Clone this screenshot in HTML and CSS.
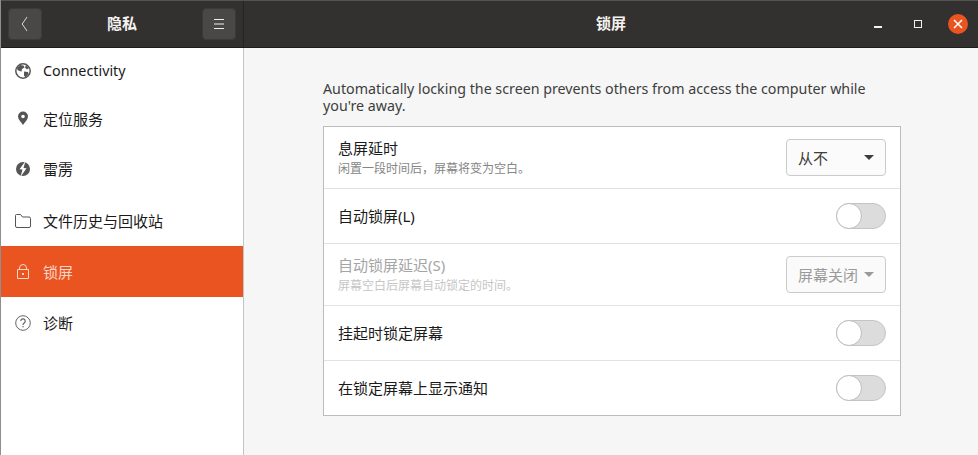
FILE: index.html
```html
<!DOCTYPE html>
<html lang="zh-CN">
<head>
  <meta charset="UTF-8" />
  <title>锁屏</title>
  <link rel="stylesheet" href="styles.css">
</head>
<body>
  <div class="window">
    <header class="titlebar">
      <div class="titlebar-left">
        <button class="head-btn" aria-label="返回">
          <svg width="16" height="16" viewBox="0 0 16 16"><path d="M10 1 5.200 8l4.800 7" fill="none" stroke="#dcdad6" stroke-width="1"/></svg>
        </button>
        <div class="head-title">隐私</div>
        <button class="head-btn" aria-label="菜单">
          <svg width="16" height="16" viewBox="0 0 16 16"><path d="M3 3.500h10M3 8h10M3 12.500h10" fill="none" stroke="#f0eeea" stroke-width="1"/></svg>
        </button>
      </div>
      <div class="titlebar-main">
        <div class="head-title">锁屏</div>
        <div class="win-controls">
          <span class="win-min"></span>
          <span class="win-max"></span>
          <span class="win-close">
            <svg width="12" height="12" viewBox="0 0 12 12"><path d="M2 2l8 8M10 2l-8 8" stroke="#fff" stroke-width="1.500" fill="none"/></svg>
          </span>
        </div>
      </div>
    </header>

    <div class="body-wrap">
      <nav class="sidebar">
        <div class="side-row">
          <svg class="side-icon" width="16" height="16" viewBox="0 0 16 16"><circle cx="8" cy="8" r="7.200" fill="none" stroke="#555" stroke-width="1.500"/><path d="M2 5 5 2l3.500.5 1 2-2.500 1.500-.5 2.500L4.500 8 2.500 7zM9 8.500l4 .5.500 2-3 3.500-1.500-2zM11 2l3 3-2 1.500-2-2z" fill="#555"/></svg>
          <span class="latin">Connectivity</span>
        </div>
        <div class="side-row">
          <svg class="side-icon" width="16" height="16" viewBox="0 0 16 16"><path fill-rule="evenodd" d="M8 .5a5 5 0 0 1 5 5c0 3-3 5.500-5 8.500-2-3-5-5.500-5-8.500a5 5 0 0 1 5-5zm0 3.200a1.800 1.800 0 1 0 0 3.600 1.800 1.800 0 0 0 0-3.600z" fill="#555"/></svg>
          <span>定位服务</span>
        </div>
        <div class="side-row">
          <svg class="side-icon" width="16" height="16" viewBox="0 0 16 16"><circle cx="8" cy="8" r="7" fill="#555"/><path d="M10.500 0 4.500 8.200l3 .3L5.500 16l6-8.800-3-.2z" fill="#fff"/></svg>
          <span>雷雳</span>
        </div>
        <div class="side-row">
          <svg class="side-icon" width="16" height="14" viewBox="0 0 16 14"><path d="M1.500.5h4l2 2.500h6.500a1.500 1.500 0 0 1 1.500 1.500v7.500a1.500 1.500 0 0 1-1.500 1.500H2A1.500 1.500 0 0 1 .5 12V1.500a1 1 0 0 1 1-1z" fill="none" stroke="#555"/></svg>
          <span>文件历史与回收站</span>
        </div>
        <div class="side-row side-row-active">
          <svg class="side-icon" width="16" height="16" viewBox="0 0 16 16"><path d="M2.500 5.500h11v9h-11zM4.500 5.500V4a3.500 3.500 0 0 1 7 0v1.500" fill="none" stroke="#fbd5c6"/><rect x="7" y="9" width="2" height="2" fill="#fbd5c6"/></svg>
          <span>锁屏</span>
        </div>
        <div class="side-row">
          <svg class="side-icon" width="16" height="16" viewBox="0 0 16 16"><circle cx="8" cy="8" r="7.300" fill="none" stroke="#666"/><path d="M5.800 6a2.200 2.200 0 1 1 3.400 1.900C8.400 8.400 8 8.900 8 10" fill="none" stroke="#666" stroke-width="1.200"/><rect x="7.400" y="11" width="1.200" height="1.300" fill="#666"/></svg>
          <span>诊断</span>
        </div>
      </nav>

      <main class="content">
        <p class="intro">Automatically locking the screen prevents others from access the computer while you're away.</p>
        <section class="card">
          <div class="row row-tall">
            <div class="row-text">
              <div class="row-label">息屏延时</div>
              <div class="row-sub">闲置一段时间后，屏幕将变为空白。</div>
            </div>
            <div class="dropdown"><span>从不</span><i class="caret"></i></div>
          </div>
          <div class="row">
            <div class="row-label">自动锁屏(L)</div>
            <div class="toggle"><i class="knob"></i></div>
          </div>
          <div class="row row-tall row-disabled">
            <div class="row-text">
              <div class="row-label">自动锁屏延迟(S)</div>
              <div class="row-sub">屏幕空白后屏幕自动锁定的时间。</div>
            </div>
            <div class="dropdown"><span>屏幕关闭</span><i class="caret"></i></div>
          </div>
          <div class="row">
            <div class="row-label">挂起时锁定屏幕</div>
            <div class="toggle"><i class="knob"></i></div>
          </div>
          <div class="row">
            <div class="row-label">在锁定屏幕上显示通知</div>
            <div class="toggle"><i class="knob"></i></div>
          </div>
        </section>
      </main>
    </div>
  </div>
</body>
</html>
```

FILE: styles.css
```css
* {
  box-sizing: border-box;
}

html, body {
  margin: 0;
  height: 100%;
  overflow: hidden;
}

body {
  font-family: "Noto Sans", "Noto Sans CJK SC", sans-serif;
  font-size: 15px;
  color: #1a1a1a;
  background: #f6f6f6;
}

.window {
  height: 455px;
  display: flex;
  flex-direction: column;
  border-left: 1px solid #8f8f8f;
}

/* title bar */
.titlebar {
  height: 48px;
  display: flex;
  background: #333030;
  border-top: 1px solid #555250;
  border-bottom: 1px solid #1f1d1c;
  color: #f5f3f0;
}

.titlebar-left {
  width: 243px;
  padding: 7px;
  display: flex;
  align-items: center;
  justify-content: space-between;
  border-right: 1px solid #262423;
}

.titlebar-main {
  flex: 1;
  position: relative;
  display: flex;
  align-items: center;
  justify-content: center;
}

.head-title {
  font-size: 15px;
  line-height: 20px;
  font-weight: 700;
  margin-bottom: 3px;
}

.head-btn {
  width: 34px;
  height: 32px;
  padding: 0;
  display: flex;
  align-items: center;
  justify-content: center;
  border: 1px solid #3c3a39;
  border-radius: 4px;
  background: #4a4846;
}

.win-controls {
  position: absolute;
  right: 10px;
  top: 13px;
  display: flex;
  align-items: center;
  gap: 26px;
}

.win-min {
  width: 8px;
  height: 2px;
  margin-top: 6px;
  background: #f5f3f0;
}

.win-max {
  width: 8px;
  height: 8px;
  margin-left: 6px;
  border: 1px solid #f5f3f0;
}

.win-close {
  width: 20px;
  height: 20px;
  border-radius: 50%;
  background: #e95420;
  display: flex;
  align-items: center;
  justify-content: center;
}

/* sidebar */
.body-wrap {
  flex: 1;
  display: flex;
  min-height: 0;
}

.sidebar {
  width: 243px;
  background: #fff;
  border-right: 1px solid #c4c4c4;
  display: grid;
  grid-template-rows: 46px 49px 52px 51px 51px 51px;
  align-content: start;
}

.side-row {
  display: flex;
  align-items: center;
  padding-left: 14px;
  gap: 12px;
  font-size: 15px;
  line-height: 20px;
}

.side-row .latin {
  font-size: 14.3px;
}

.side-icon {
  flex: none;
}

.side-row-active {
  background: #e95420;
  color: #fbd5c6;
}

/* content */
.content {
  flex: 1;
  padding: 32px 77px 0 79px;
}

.intro {
  margin: 0 0 12px 0;
  font-size: 14.25px;
  line-height: 17px;
  color: #3d3d3d;
}

.card {
  background: #fff;
  border: 1px solid #bdbdbd;
}

.row {
  height: 55px;
  display: flex;
  align-items: center;
  justify-content: space-between;
  padding: 0 14px;
  border-bottom: 1px solid #e2e2e2;
}

.row:last-child {
  border-bottom: none;
  height: 54px;
}

.row-tall {
  height: 62px;
}

.row-label {
  font-size: 15px;
  line-height: 20px;
}

.row-text .row-label {
  margin-bottom: 3px;
}

.row-sub {
  font-size: 12px;
  line-height: 16px;
  color: #858585;
}

.row-disabled .row-label {
  color: #a5a5a5;
}

.row-disabled .row-sub {
  color: #c6c6c6;
}

.dropdown {
  width: 100px;
  height: 37px;
  padding: 0 11px;
  display: flex;
  align-items: center;
  justify-content: space-between;
  font-size: 15px;
  color: #3d3d3d;
  background: #fbfbfb;
  border: 1px solid #cbcbcb;
  border-radius: 4px;
}

.caret {
  width: 0;
  height: 0;
  border-left: 5px solid transparent;
  border-right: 5px solid transparent;
  border-top: 5px solid #3d3d3d;
}

.row-disabled .dropdown {
  color: #9a9a9a;
  background: #fafafa;
}

.row-disabled .caret {
  border-top-color: #9a9a9a;
}

.toggle {
  width: 50px;
  height: 26px;
  border-radius: 13px;
  background: #dcdcdc;
  border: 1px solid #c4c4c4;
  position: relative;
}

.knob {
  position: absolute;
  left: -1px;
  top: -1px;
  width: 26px;
  height: 26px;
  border-radius: 50%;
  background: #fff;
  border: 1px solid #bdbdbd;
}
```
